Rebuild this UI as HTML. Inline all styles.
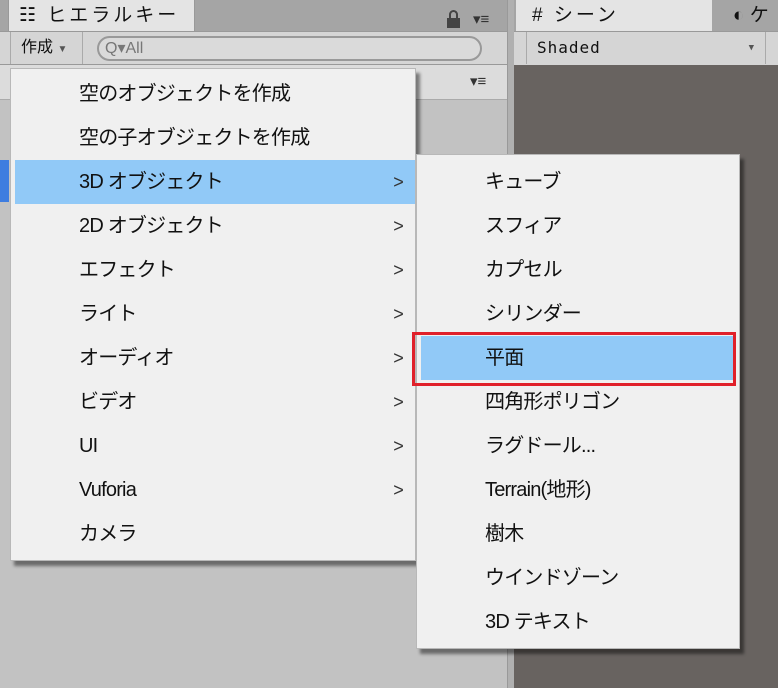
<!DOCTYPE html>
<html><head><meta charset="utf-8"><style>
*{margin:0;padding:0;box-sizing:border-box}
body{width:778px;height:688px;overflow:hidden;position:relative;background:#c2c2c2;font-family:"Liberation Sans","Noto Sans CJK JP",sans-serif;color:#111}
.abs{position:absolute}
.menu{position:absolute;background:#f0f0f0;border:1px solid #b8b8b8;box-shadow:4px 5px 3px rgba(0,0,0,.45)}
.it{position:absolute;left:0;right:0;height:44px;font-size:20px;letter-spacing:-0.8px;line-height:44px;padding-left:68px;white-space:nowrap}
.ar{position:absolute;right:12px;top:0;font-size:18px;color:#333}
.hl{background:#91c9f7}
</style></head><body>
<div class="abs" style="left:0;top:0;width:508px;height:31px;background:#a5a5a5"></div>
<div class="abs" style="left:8px;top:0;width:187px;height:32px;background:#e4e4e4;border:1px solid #999;border-top:none;border-bottom:none;font-size:19px;line-height:32px;padding-left:10px;letter-spacing:3px">☷ ヒエラルキー</div>
<div class="abs" style="left:447px;top:10px;width:13px;height:18px">
 <div class="abs" style="left:0;top:8px;width:13px;height:10px;background:#444"></div>
 <div class="abs" style="left:2px;top:0;width:9px;height:11px;border:2px solid #444;border-bottom:none;border-radius:5px 5px 0 0"></div></div>
<div class="abs" style="left:473px;top:10px;font-size:15px;color:#333">▾≡</div>
<div class="abs" style="left:0;top:31px;width:508px;height:34px;background:#d5d5d5;border-top:1px solid #999;border-bottom:1px solid #999"></div>
<div class="abs" style="left:10px;top:32px;width:73px;height:32px;border-right:1px solid #aaa;border-left:1px solid #aaa;font-size:16px;line-height:32px;padding-left:10px">作成 <span style="font-size:10px;color:#555">▼</span></div>
<div class="abs" style="left:97px;top:36px;width:385px;height:25px;border:2px solid #999;border-radius:13px;background:#dadada;font-size:16px;line-height:21px;padding-left:6px;color:#777">Q▾All</div>
<div class="abs" style="left:0;top:65px;width:508px;height:35px;background:#dcdcdc;border-bottom:1px solid #aaa"></div>
<div class="abs" style="left:470px;top:72px;font-size:15px;color:#333">▾≡</div>
<div class="abs" style="left:0;top:160px;width:9px;height:42px;background:#3e7de0"></div>
<div class="abs" style="left:507px;top:0;width:7px;height:688px;background:#b0b0b0;border-left:1px solid #999"></div>
<div class="abs" style="left:514px;top:0;width:264px;height:31px;background:#a5a5a5"></div>
<div class="abs" style="left:516px;top:0;width:196px;height:32px;background:#e4e4e4;font-size:19px;line-height:32px;padding-left:16px;letter-spacing:3px">#&nbsp;シーン</div>
<div class="abs" style="left:733px;top:0;font-size:19px;line-height:32px">◐ ケ</div>
<div class="abs" style="left:514px;top:31px;width:264px;height:34px;background:#d5d5d5;border-top:1px solid #999"></div>
<div class="abs" style="left:526px;top:32px;width:240px;height:32px;border-left:1px solid #aaa;border-right:1px solid #aaa;font-family:'DejaVu Sans Mono',monospace;font-size:16px;line-height:32px;padding-left:10px;letter-spacing:1px">Shaded<span style="position:absolute;right:10px;font-size:9px;color:#555">▼</span></div>
<div class="abs" style="left:514px;top:65px;width:264px;height:623px;background:#686360"></div>
<div class="menu" style="left:10px;top:68px;width:406px;height:493px">
 <div class="it" style="top:3px">空のオブジェクトを作成</div>
 <div class="it" style="top:47px">空の子オブジェクトを作成</div>
 <div class="it hl" style="top:91px;left:4px;padding-left:64px">3D オブジェクト<span class="ar">&gt;</span></div>
 <div class="it" style="top:135px">2D オブジェクト<span class="ar">&gt;</span></div>
 <div class="it" style="top:179px">エフェクト<span class="ar">&gt;</span></div>
 <div class="it" style="top:223px">ライト<span class="ar">&gt;</span></div>
 <div class="it" style="top:267px">オーディオ<span class="ar">&gt;</span></div>
 <div class="it" style="top:311px">ビデオ<span class="ar">&gt;</span></div>
 <div class="it" style="top:355px">UI<span class="ar">&gt;</span></div>
 <div class="it" style="top:399px">Vuforia<span class="ar">&gt;</span></div>
 <div class="it" style="top:443px">カメラ</div>
</div>
<div class="menu" style="left:416px;top:154px;width:324px;height:495px">
 <div class="it" style="top:5px">キューブ</div>
 <div class="it" style="top:49px">スフィア</div>
 <div class="it" style="top:93px">カプセル</div>
 <div class="it" style="top:137px">シリンダー</div>
 <div class="it hl" style="top:181px;left:4px;right:6px;padding-left:64px">平面</div>
 <div class="it" style="top:225px">四角形ポリゴン</div>
 <div class="it" style="top:269px">ラグドール...</div>
 <div class="it" style="top:313px">Terrain(地形)</div>
 <div class="it" style="top:357px">樹木</div>
 <div class="it" style="top:401px">ウインドゾーン</div>
 <div class="it" style="top:445px">3D テキスト</div>
</div>
<div class="abs" style="left:412px;top:332px;width:324px;height:54px;border:3px solid #e0202a"></div>
</body></html>
